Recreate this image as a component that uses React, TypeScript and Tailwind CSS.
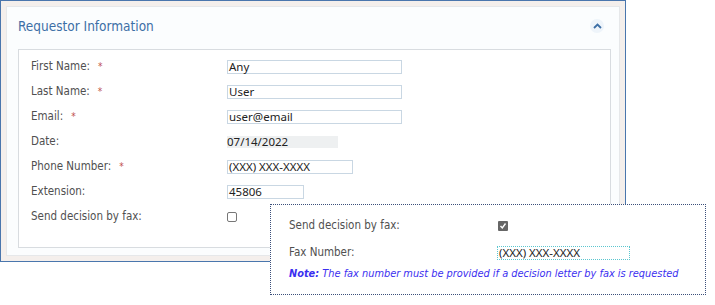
import React from "react";

const LBL = '"DejaVu Sans Condensed", "DejaVu Sans", sans-serif';

const Req = () => <span className="ml-[8px] text-[#c0504d] text-[10px]">*</span>;

function Row({ label, req, children }: { label: string; req?: boolean; children?: React.ReactNode }) {
  return (
    <div className="flex h-[25px] items-center">
      <div className="w-[196px] shrink-0 text-[11.5px] text-[#505050]" style={{ fontFamily: LBL }}>
        {label}
        {req && <Req />}
      </div>
      {children}
    </div>
  );
}

const Input = ({ value, w }: { value: string; w: string }) => (
  <div className={`${w} flex h-[14px] items-center border border-[#c9d7e3] bg-white px-[1px] text-[11.5px] text-[#222]`}>{value}</div>
);

export default function App() {
  return (
    <div className="relative h-[305px] w-[715px] bg-white" style={{ fontFamily: '"Noto Sans", "Open Sans", sans-serif' }}>
      <div className="h-[262px] w-[626px] border border-[#4a76ad] bg-[#f4efec] p-[5px]">
        <div className="flex h-full flex-col border border-[#e6e8ea] bg-[#fbfdfe] px-[11px] pt-[8px]">
          <div className="flex h-[22px] items-center justify-between pr-[4px]">
            <span className="text-[13.5px] text-[#3d6fa6]" style={{ fontFamily: LBL }}>Requestor Information</span>
            <span className="flex h-[14px] w-[14px] items-center justify-center rounded-full bg-[#eef4fa]">
              <svg width="9" height="6" viewBox="0 0 9 6">
                <polyline points="1,5 4.5,1.5 8,5" fill="none" stroke="#3d6fa6" strokeWidth="1.8" />
              </svg>
            </span>
          </div>
          <div className="mt-[12px] h-[199px] w-[593px] border border-[#d8dce0] bg-white pl-[12px] pt-[4px]">
            <Row label="First Name:" req>
              <Input value="Any" w="w-[175px]" />
            </Row>
            <Row label="Last Name:" req>
              <Input value="User" w="w-[175px]" />
            </Row>
            <Row label="Email:" req>
              <Input value="user@email" w="w-[175px]" />
            </Row>
            <Row label="Date:">
              <div className="flex h-[12px] w-[111px] items-center bg-[#eef0f1] text-[11.5px] text-[#222]">07/14/2022</div>
            </Row>
            <Row label="Phone Number:" req>
              <Input value="(XXX) XXX-XXXX" w="w-[126px]" />
            </Row>
            <Row label="Extension:">
              <Input value="45806" w="w-[77px]" />
            </Row>
            <Row label="Send decision by fax:">
              <span className="h-[10px] w-[10px] rounded-[2px] border border-[#777] bg-white" />
            </Row>
          </div>
        </div>
      </div>

      <div className="absolute left-[270px] top-[204px] h-[91px] w-[436px] border border-dotted border-[#3b4f7a] bg-white pl-[18px] pt-[10px]">
        <div className="flex h-[22px] items-center">
          <div className="w-[209px] shrink-0 text-[11.5px] text-[#505050]" style={{ fontFamily: LBL }}>Send decision by fax:</div>
          <span className="flex h-[10px] w-[10px] items-center justify-center rounded-[1px] bg-[#666]">
            <svg width="8" height="8" viewBox="0 0 8 8">
              <polyline points="1.5,4 3.3,6 6.5,1.5" fill="none" stroke="#fff" strokeWidth="1.4" />
            </svg>
          </span>
        </div>
        <div className="mt-[6px] flex h-[20px] items-center">
          <div className="w-[208px] shrink-0 text-[11.5px] text-[#505050]" style={{ fontFamily: LBL }}>Fax Number:</div>
          <div className="flex h-[14px] w-[133px] items-center border border-dotted border-[#5cc6cf] px-[1px] text-[11.5px] text-[#222]">(XXX) XXX-XXXX</div>
        </div>
        <div className="mt-[3px] text-[10.9px] italic text-[#3b2ff0]" style={{ fontFamily: LBL }}>
          <span className="font-bold">Note:</span> The fax number must be provided if a decision letter by fax is requested
        </div>
      </div>
    </div>
  );
}
